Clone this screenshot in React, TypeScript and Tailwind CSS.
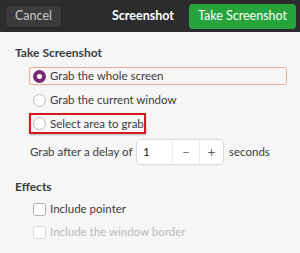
import React from 'react';

function Radio({ checked }: { checked?: boolean }) {
  if (checked) {
    return (
      <span className="flex h-[13px] w-[13px] shrink-0 items-center justify-center rounded-full bg-[#7a2a73]">
        <span className="h-[5px] w-[5px] rounded-full bg-white" />
      </span>
    );
  }
  return <span className="h-[13px] w-[13px] shrink-0 rounded-full border border-[#bdbdbd] bg-white" />;
}

function Checkbox({ disabled }: { disabled?: boolean }) {
  return (
    <span
      className={`h-[13px] w-[13px] shrink-0 rounded-[3px] border bg-white ${
        disabled ? 'border-[#d6d6d6]' : 'border-[#b0b0b0]'
      }`}
    />
  );
}

export default function App() {
  return (
    <div className="h-[253px] w-[300px] overflow-hidden whitespace-nowrap bg-[#f6f6f6] text-[11.5px] leading-[16px] text-[#3c3c3c] [font-family:Lato,sans-serif]">
      <div className="flex h-8 items-center bg-[#2c2c2c] pl-[5px] pr-1 text-[12.5px]">
        <button className="h-[23px] w-[57px] rounded-[4px] border border-[#262626] bg-[#3b3b3b] text-[#c8c8c8]">
          Cancel
        </button>
        <span className="ml-auto mr-[15px] font-bold text-white">Screenshot</span>
        <button className="h-[25px] w-[107px] rounded-[4px] bg-[#26a33a] text-white">Take Screenshot</button>
      </div>

      <div className="px-[15px] pt-[13px]">
        <div className="text-[12px] font-bold">Take Screenshot</div>

        <div className="mt-[6px] ml-[14px] flex flex-col">
          <div className="flex h-[18px] w-[258px] items-center gap-[4px] rounded-[2px] border border-[#f0ab92] pl-[3px]">
            <Radio checked />
            <span>Grab the whole screen</span>
          </div>
          <div className="mt-[6px] flex h-[18px] items-center gap-[4px] pl-1">
            <Radio />
            <span>Grab the current window</span>
          </div>
          <div className="mt-[4px] flex h-[21px] w-[117px] items-center gap-[4px] border-2 border-[#d6171e] pl-[2px] shadow-[0_1px_2px_rgba(0,0,0,0.25)]">
            <Radio />
            <span>Select area to grab</span>
          </div>
          <div className="mt-[5px] flex items-center pl-[1px]">
            <span className="w-[106px]">Grab after a delay of</span>
            <div className="flex h-[26px] w-[88px] items-stretch rounded-[4px] border border-[#dcdcdc] bg-white">
              <span className="flex w-[35px] items-center pl-[6px] text-[#222]">1</span>
              <span className="flex w-[27px] items-center justify-center border-l border-[#ececec] text-[13px] text-[#777]">−</span>
              <span className="flex flex-1 items-center justify-center border-l border-[#ececec] text-[13px] text-[#555]">+</span>
            </div>
            <span className="ml-[5px]">seconds</span>
          </div>
        </div>

        <div className="mt-[14px] text-[12px] font-bold">Effects</div>
        <div className="mt-[6px] ml-[18px] flex flex-col gap-[7px]">
          <div className="flex h-[16px] items-center gap-[4px]">
            <Checkbox />
            <span>Include pointer</span>
          </div>
          <div className="flex h-[16px] items-center gap-[4px] text-[#b9b9b9]">
            <Checkbox disabled />
            <span>Include the window border</span>
          </div>
        </div>
      </div>
    </div>
  );
}
